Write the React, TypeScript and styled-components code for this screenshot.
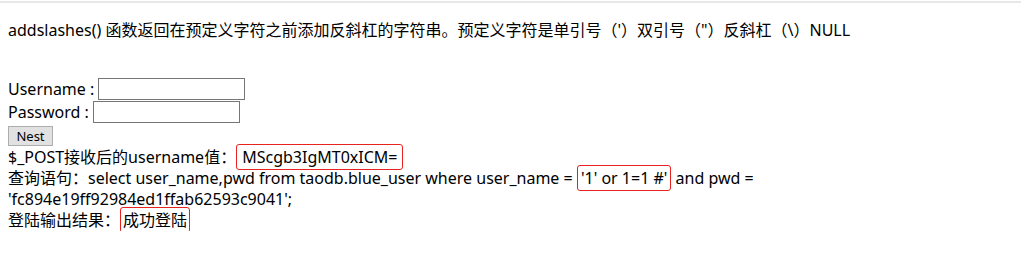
import React from 'react'
import styled, { createGlobalStyle } from 'styled-components'

const GlobalStyle = createGlobalStyle`
  html, body {
    margin: 0;
    padding: 0;
    background: #ffffff;
  }
  body {
    font-family: "Noto Sans", "Noto Sans CJK SC", sans-serif;
    font-size: 16px;
    color: #000000;
  }
`

const TopRule = styled.div`
  height: 2px;
  margin-top: 1px;
  background: #e8e8e8;
`

const Page = styled.div`
  padding: 0 8px;
`

const Intro = styled.p`
  margin: 17px 0 0;
  line-height: 21px;
`

const Form = styled.form`
  margin-top: 37px;
  display: flex;
  flex-direction: column;
  align-items: flex-start;
`

const Field = styled.label<{ $gap?: number }>`
  display: flex;
  align-items: center;
  gap: 4px;
  height: 22px;
  margin-top: ${(p) => p.$gap ?? 0}px;
`

const Input = styled.input`
  box-sizing: border-box;
  width: 147px;
  height: 22px;
  border: 1px solid #767676;
  padding: 1px 2px;
  font-size: 13px;
  background: #fff;
`

const Button = styled.button`
  box-sizing: border-box;
  margin-top: 3px;
  width: 45px;
  height: 20px;
  padding: 0;
  border: 1px solid #adadad;
  background: #e1e1e1;
  font-family: "Noto Sans", "Liberation Sans", sans-serif;
  font-size: 13px;
  line-height: 18px;
  color: #000;
`

const Output = styled.div`
  margin-top: 1px;
  line-height: 21px;
`

const Line = styled.div``

const Boxed = styled.span<{ $padX?: number }>`
  border: 1px solid #e8231f;
  border-radius: 3px;
  padding: 1px ${(p) => p.$padX ?? 2}px;
`

export default function App() {
  return (
    <>
      <GlobalStyle />
      <TopRule />
      <Page>
        <Intro>
          addslashes() 函数返回在预定义字符之前添加反斜杠的字符串。预定义字符是单引号（'）双引号（"）反斜杠（\）NULL
        </Intro>
        <Form onSubmit={(e) => e.preventDefault()}>
          <Field>
            Username :
            <Input type="text" name="username" />
          </Field>
          <Field $gap={1}>
            Password :
            <Input type="password" name="password" />
          </Field>
          <Button type="submit">Nest</Button>
        </Form>
        <Output>
          <Line>
            $_POST接收后的username值：<Boxed $padX={5}>MScgb3IgMT0xICM=</Boxed>
          </Line>
          <Line>
            查询语句：select user_name,pwd from taodb.blue_user where user_name = <Boxed $padX={3}>'1' or 1=1 #'</Boxed> and pwd = 'fc894e19ff92984ed1ffab62593c9041';
          </Line>
          <Line>
            登陆输出结果：<Boxed>成功登陆</Boxed>
          </Line>
        </Output>
      </Page>
    </>
  )
}
